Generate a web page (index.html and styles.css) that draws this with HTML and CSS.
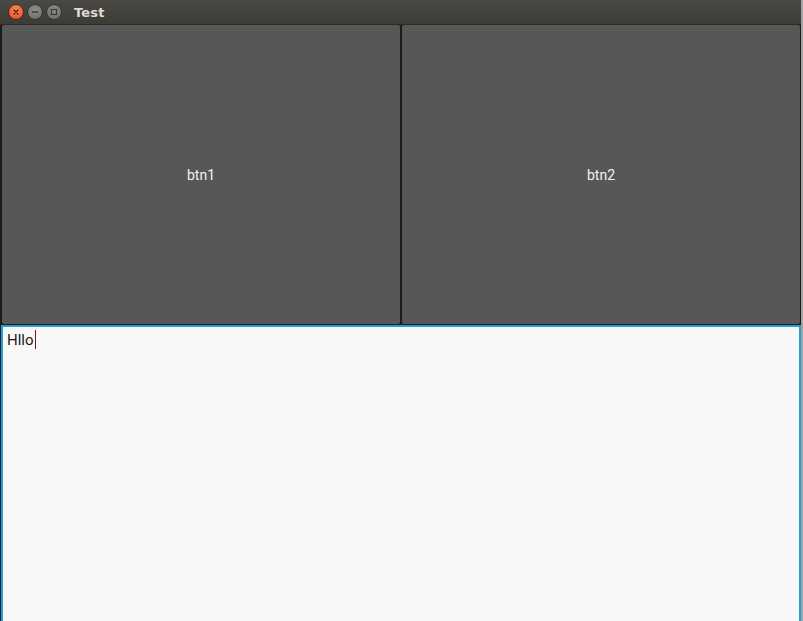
FILE: index.html
```html
<!DOCTYPE html>
<html>
<head>
<meta charset="utf-8">
<link rel="stylesheet" href="styles.css">
</head>
<body>
<div class="window">
  <div class="titlebar">
    <div class="controls">
      <span class="wbtn close">
        <svg width="10" height="10" viewBox="0 0 10 10"><path d="M3 3 L7 7 M7 3 L3 7" stroke="#4a1a08" stroke-width="1.3" stroke-linecap="round"/></svg>
      </span>
      <span class="wbtn">
        <svg width="10" height="10" viewBox="0 0 10 10"><path d="M2 5 H8" stroke="#3a3a38" stroke-width="1.4"/></svg>
      </span>
      <span class="wbtn">
        <svg width="10" height="10" viewBox="0 0 10 10"><rect x="2.5" y="2.5" width="5" height="5" fill="none" stroke="#3a3a38" stroke-width="1.2"/></svg>
      </span>
    </div>
    <span class="title">Test</span>
  </div>
  <div class="content">
    <div class="buttons">
      <button class="btn">btn1</button>
      <button class="btn">btn2</button>
    </div>
    <div class="editor"><span class="text">Hllo</span><span class="caret"></span></div>
  </div>
</div>
<div class="desk"></div>
</body>
</html>
```
FILE: styles.css
```css
html, body {
  margin: 0;
  padding: 0;
  height: 100%;
  overflow: hidden;
}
body {
  display: flex;
  align-items: flex-start;
  background: #9c9c9c;
  font-family: "Roboto", "Liberation Sans", sans-serif;
}
.window {
  width: 801px;
  height: 630px;
  flex: none;
  display: flex;
  flex-direction: column;
  background: #1c1c1c;
}
.desk {
  flex: 1;
  align-self: stretch;
  background: #a3a3a3;
}
.titlebar {
  height: 24px;
  flex: none;
  display: flex;
  align-items: center;
  background: linear-gradient(#4a4944, #3c3b37);
  border-bottom: 1px solid #2a2a28;
}
.controls {
  display: flex;
  gap: 3px;
  margin-left: 8px;
}
.wbtn {
  width: 16px;
  height: 16px;
  border-radius: 50%;
  background: radial-gradient(circle at 50% 35%, #8e8d88, #6a6964);
  border: 1px solid #33322f;
  display: flex;
  align-items: center;
  justify-content: center;
  box-sizing: border-box;
}
.wbtn.close {
  background: radial-gradient(circle at 50% 35%, #f88a5a, #e0491d);
  border-color: #5a2a14;
}
.title {
  margin-left: 12px;
  color: #dfdbd2;
  font-family: "DejaVu Sans", sans-serif;
  font-weight: bold;
  font-size: 13px;
  letter-spacing: 0.2px;
}
.content {
  flex: 1;
  display: flex;
  flex-direction: column;
  padding: 0 0 0 1px;
}
.buttons {
  height: 299px;
  flex: none;
  display: flex;
  gap: 2px;
  padding: 0 1px 1px 1px;
}
.btn {
  flex: 1;
  border: none;
  margin: 0;
  background: #575757;
  color: #f2f2f2;
  font-family: "Roboto", "Liberation Sans", sans-serif;
  font-size: 14px;
  border-radius: 2px;
  padding: 0;
}
.editor {
  flex: 1;
  background: #f8f8f8;
  border: 2px solid #1fa0dc;
  padding: 4px 0 0 4px;
  font-family: "Roboto", "Liberation Sans", sans-serif;
  font-size: 15px;
  color: #1a1a1a;
  display: flex;
  align-items: flex-start;
}
.text {
  line-height: 18px;
}
.caret {
  width: 1px;
  height: 19px;
  margin-top: -1px;
  margin-left: 1px;
  background: #7a1010;
}
```
